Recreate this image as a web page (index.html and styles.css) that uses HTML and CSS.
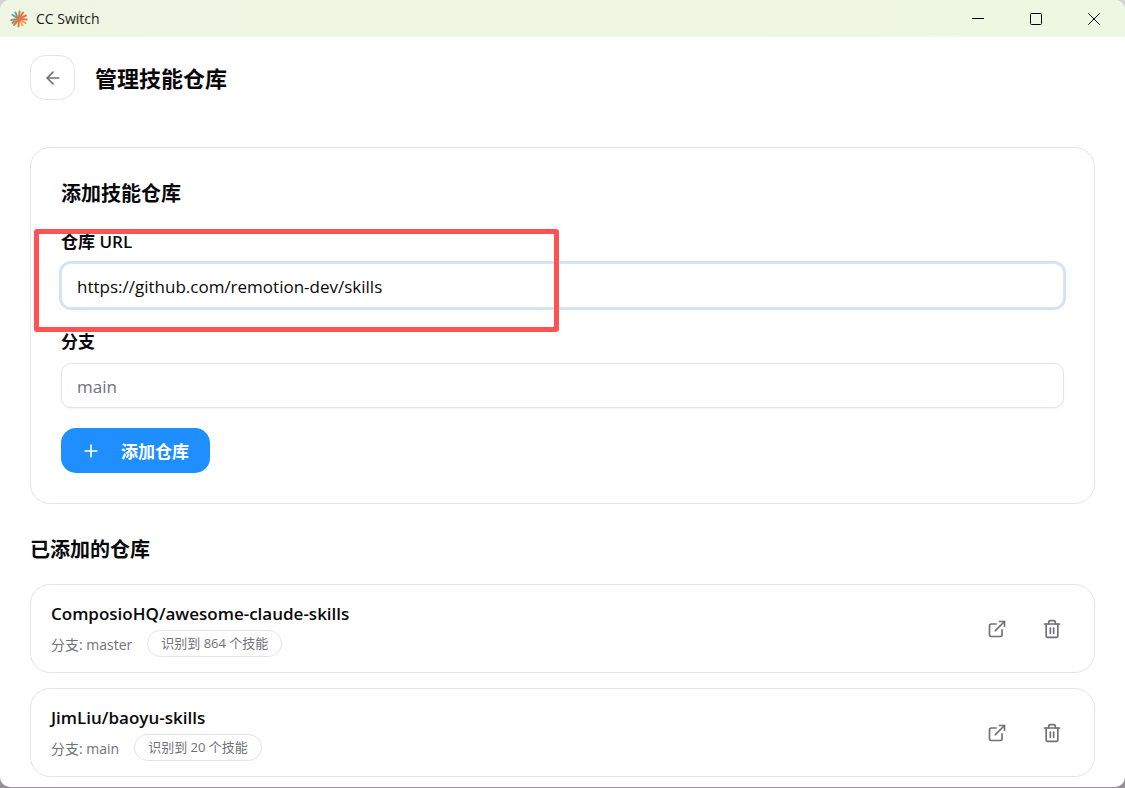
FILE: index.html
```
<!DOCTYPE html>
<html lang="zh-CN">
<head>
  <meta charset="UTF-8" />
  <meta name="viewport" content="width=device-width, initial-scale=1.0"/>
  <title>CC Switch</title>
  <link rel="stylesheet" href="styles.css">
</head>
<body>
  <!-- shared icons -->
  <svg class="sprite" aria-hidden="true">
    <symbol id="icon-external" viewBox="0 0 24 24">
      <path d="M15 3h6v6"/>
      <path d="M10 14 21 3"/>
      <path d="M18 13v6a2 2 0 0 1-2 2H5a2 2 0 0 1-2-2V8a2 2 0 0 1 2-2h6"/>
    </symbol>
    <symbol id="icon-trash" viewBox="0 0 24 24">
      <path d="M3 6h18"/>
      <path d="M19 6v14c0 1-1 2-2 2H7c-1 0-2-1-2-2V6"/>
      <path d="M8 6V4c0-1 1-2 2-2h4c1 0 2 1 2 2v2"/>
      <path d="M10 11v6"/>
      <path d="M14 11v6"/>
    </symbol>
  </svg>

  <div class="window">
    <div class="titlebar">
      <svg class="app-icon" viewBox="0 0 18 18" fill="none" stroke-width="2" stroke-linecap="round">
        <g stroke="#e2764d">
          <path d="M9 9 9.5 1.5"/>
          <path d="M9 9 13 2.5"/>
          <path d="M9 9 16 5.5"/>
          <path d="M9 9 16.8 9.5"/>
          <path d="M9 9 4 15"/>
          <path d="M9 9 1.3 10"/>
          <path d="M9 9 8.5 16.5"/>
        </g>
        <path d="M9 9 15.5 13" stroke="#ef9a4a"/>
        <path d="M9 9 12.5 15.5" stroke="#f2b544"/>
        <path d="M7.5 7.5 5.5 2.5" stroke="#57a79c"/>
        <path d="M6.5 7.5 2.5 5" stroke="#57a79c"/>
        <path d="M5 11 2.5 13" stroke="#57a79c"/>
        <circle cx="9" cy="9" r="2.5" fill="#e2764d"/>
      </svg>
      <span class="app-name">CC Switch</span>
      <div class="window-controls">
        <button aria-label="最小化"><svg viewBox="0 0 12 12"><path d="M0 5.5h12"/></svg></button>
        <button aria-label="最大化"><svg viewBox="0 0 12 12"><rect x="0.5" y="0.5" width="11" height="11" rx="1"/></svg></button>
        <button aria-label="关闭"><svg viewBox="0 0 12 12"><path d="M0.3 0.3 11.7 11.7M11.7 0.3 0.3 11.7"/></svg></button>
      </div>
    </div>

    <header class="page-header">
      <button class="back" aria-label="返回">
        <svg class="icon" viewBox="0 0 24 24"><path d="m12 19-7-7 7-7"/><path d="M19 12H5"/></svg>
      </button>
      <h1>管理技能仓库</h1>
    </header>

    <main class="content">
      <form class="card add-card">
        <h2>添加技能仓库</h2>
        <div class="field">
          <label for="repoUrl">仓库 URL</label>
          <input class="focused" id="repoUrl" type="text" value="https://github.com/remotion-dev/skills">
        </div>
        <div class="field">
          <label for="branch">分支</label>
          <input id="branch" type="text" placeholder="main">
        </div>
        <button class="add-button" type="button">
          <svg class="icon" viewBox="0 0 24 24"><path d="M5 12h14"/><path d="M12 5v14"/></svg>
          添加仓库
        </button>
        <div class="highlight"></div>
      </form>

      <section class="repos">
        <h2>已添加的仓库</h2>
        <div class="card repo">
          <div class="repo-info">
            <h3>ComposioHQ/awesome-claude-skills</h3>
            <div class="meta">
              <span>分支: master</span>
              <span class="badge">识别到 864 个技能</span>
            </div>
          </div>
          <div class="actions">
            <button aria-label="打开仓库"><svg class="icon"><use href="#icon-external"/></svg></button>
            <button aria-label="删除仓库"><svg class="icon"><use href="#icon-trash"/></svg></button>
          </div>
        </div>
        <div class="card repo">
          <div class="repo-info">
            <h3>JimLiu/baoyu-skills</h3>
            <div class="meta">
              <span>分支: main</span>
              <span class="badge">识别到 20 个技能</span>
            </div>
          </div>
          <div class="actions">
            <button aria-label="打开仓库"><svg class="icon"><use href="#icon-external"/></svg></button>
            <button aria-label="删除仓库"><svg class="icon"><use href="#icon-trash"/></svg></button>
          </div>
        </div>
      </section>
    </main>
  </div>
</body>
</html>
```
FILE: styles.css
```
* {
  box-sizing: border-box;
}
body {
  margin: 0;
  padding-bottom: 1px;
  background: linear-gradient(#d4d4d4, #949294);
  color: #09090b;
  font-family: "Open Sans", "Noto Sans CJK SC", sans-serif;
  font-size: 17px;
}
h1, h2, h3 {
  margin: 0;
}
button, input {
  font: inherit;
}
button {
  padding: 0;
  border: none;
  background: none;
  color: #71717a;
  cursor: pointer;
}
.sprite {
  display: none;
}
.window {
  min-height: calc(100vh - 1px);
  background: #fff;
  border-radius: 10px;
  overflow: hidden;
}
.titlebar {
  display: flex;
  align-items: center;
  height: 37px;
  padding: 0 2px 0 10px;
  background: linear-gradient(90deg, #eef6e4, #f0f6e1 40%, #edf7e2);
}
.app-icon {
  width: 18px;
  height: 18px;
}
.app-name {
  margin-left: 8px;
  font-size: 14px;
  color: #1a1a1a;
}
.window-controls {
  display: flex;
  align-self: stretch;
  margin-left: auto;
}
.window-controls button {
  display: flex;
  align-items: center;
  justify-content: center;
  width: 58px;
}
.window-controls svg {
  width: 12px;
  height: 12px;
  fill: none;
  stroke: #000;
}
.page-header {
  display: flex;
  align-items: center;
  gap: 20px;
  padding: 18px 30px;
}
.page-header h1 {
  font-size: 22px;
  line-height: 28px;
}
.back {
  display: flex;
  align-items: center;
  justify-content: center;
  width: 45px;
  height: 45px;
  border: 1px solid #e4e4e7;
  border-radius: 15px;
}
.icon {
  width: 20px;
  height: 20px;
  fill: none;
  stroke: currentColor;
  stroke-width: 2;
  stroke-linecap: round;
  stroke-linejoin: round;
}
.content {
  padding: 29px 30px 10px;
}
.content h2 {
  font-size: 20px;
  line-height: 32px;
}
.card {
  border: 1px solid #e4e4e7;
  border-radius: 20px;
}
.add-card {
  position: relative;
  padding: 30px;
}
.field {
  margin: 21px 0 20px;
}
.field + .field {
  margin-top: 23px;
}
.field label {
  display: block;
  margin-bottom: 10px;
  font-weight: 600;
  line-height: 22px;
}
.field input {
  display: block;
  width: 100%;
  height: 45px;
  padding: 1px 15px 0;
  border: 1px solid #e4e4e7;
  border-radius: 10px;
  outline: none;
  background: #fff;
  color: #09090b;
  box-shadow: 0 1px 2px rgba(0, 0, 0, 0.05);
}
.field input::placeholder {
  color: #71717a;
}
.field input.focused {
  box-shadow: 0 0 0 2px #cce4ff;
}
.add-button {
  display: flex;
  align-items: center;
  gap: 20px;
  height: 45px;
  padding: 0 21px 0 20px;
  border-radius: 15px;
  background: #1f8fff;
  color: #fff;
  font-weight: 600;
}
/* callout around the url field */
.highlight {
  position: absolute;
  top: 81px;
  left: 3px;
  width: 525px;
  height: 103px;
  border: 5px solid #ff5252;
  border-radius: 3px;
  pointer-events: none;
}
.repos {
  display: flex;
  flex-direction: column;
  gap: 15px;
  margin-top: 30px;
}
.repos h2 {
  margin-bottom: 3px;
}
.repo {
  display: flex;
  align-items: center;
  justify-content: space-between;
  padding: 15px 20px;
}
.repo h3 {
  font-size: 17px;
  font-weight: 600;
  line-height: 28px;
}
.meta {
  display: flex;
  align-items: center;
  gap: 15px;
  margin-top: 2px;
  color: #71717a;
  font-size: 14px;
}
.badge {
  padding: 0 13px;
  border: 1px solid #e4e4e7;
  border-radius: 14px;
  font-size: 13px;
  line-height: 25px;
}
.actions {
  display: flex;
  gap: 10px;
}
.actions button {
  display: flex;
  align-items: center;
  justify-content: center;
  width: 45px;
  height: 45px;
}
```
